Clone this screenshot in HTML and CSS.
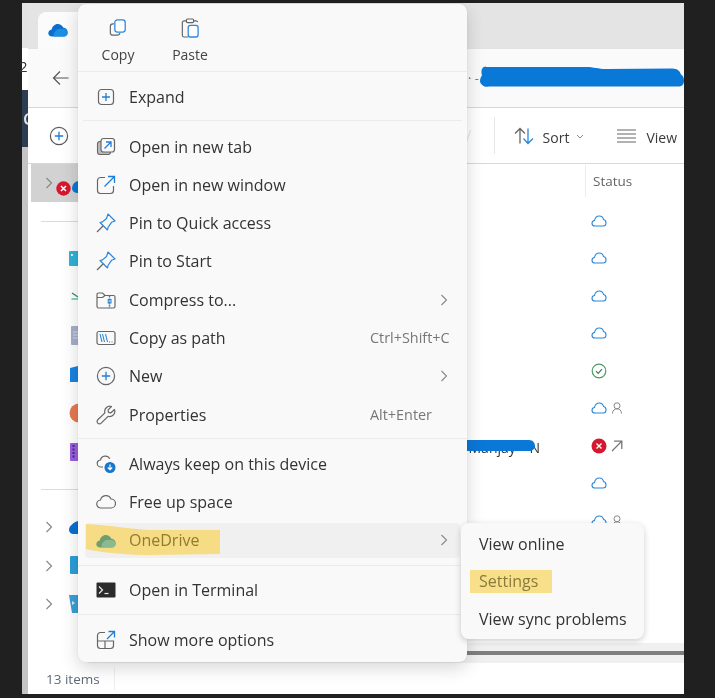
FILE: index.html
```html
<!DOCTYPE html>
<html lang="en">
<head>
<meta charset="utf-8">
<title>OneDrive context menu</title>
<link rel="stylesheet" href="styles.css">
</head>
<body>
<div class="page">
  <div class="window">
    <div class="strip">
      <div class="strip-top"></div>
      <div class="strip-num">2</div>
      <div class="strip-dark">C</div>
      <div class="strip-rest"></div>
    </div>
    <div class="explorer">
      <div class="tabbar">
        <div class="tab">
          <svg class="tab-cloud" viewBox="0 0 20 14" width="20" height="14"><path fill="#0a6fd0" d="M4 13.500C1.800 13.500 .3 12 .3 10.200c0-1.800 1.300-3.200 3.200-3.400C4.200 3.600 6.700 1 9.800 1c2.400 0 4.400 1.400 5.300 3.600 2.600.2 4.600 2.300 4.600 4.900 0 2.300-1.800 4-4.200 4z"/><path fill="#1c8fe0" d="M8 7.500c1-1.600 3.600-2.400 5.600-1.400 1.500-.6 4.200-.1 5.400 2.200.6 1.200.7 2.400.3 3.400-.6 1.100-1.900 1.800-3.500 1.800H7c-2.400 0-1.400-4.400 1-6z"/></svg>
        </div>
      </div>
      <div class="addressbar">
        <svg class="icon-back" viewBox="0 0 18 16" width="18" height="16"><path d="M16.500 8H1.500M8 1.500 1.500 8 8 14.500" fill="none" stroke="#555" stroke-width="1.200"/></svg>
        <span class="crumb-dash">· -</span>
        <svg class="scribble" viewBox="0 0 204 22" width="204" height="22"><path fill="#0a78d7" d="M6 1h100c8 0 12 2 20 2l66-.5c6 0 8 3 9 6 2 1 3 3 3 6 0 4-2 6-6 6H9c-4 1-8-1-9-5 0-3 1-5 2-6-1-3-1-9 4-9z"/></svg>
      </div>
      <div class="commandbar">
        <svg class="icon-add" viewBox="0 0 20 20" width="20" height="20"><circle cx="10" cy="10" r="8.600" fill="none" stroke="#5a5a5a" stroke-width="1.200"/><path d="M10 5.800v8.400M5.800 10h8.400" stroke="#1f7fd6" stroke-width="1.300"/></svg>
        <span class="cmd-ghost">/</span>
        <span class="cmd-sep"></span>
        <svg class="icon-sort" viewBox="0 0 20 18" width="20" height="18"><path d="M6 16.500V1.500M1 6.500l5-5 5 5" fill="none" stroke="#666" stroke-width="1.300"/><path d="M14 1.500v15M9.500 11.500l4.500 5 5-5" fill="none" stroke="#2a86d8" stroke-width="1.300"/></svg>
        <span class="cmd-label">Sort</span>
        <svg class="icon-caret" viewBox="0 0 8 5" width="8" height="5"><path d="M1 1l3 3 3-3" fill="none" stroke="#888"/></svg>
        <svg class="icon-view" viewBox="0 0 19 14" width="19" height="14"><path d="M0 1h19M0 5h19M0 9h19M0 13h19" stroke="#666" stroke-width="1.100"/></svg>
        <span class="cmd-label cmd-view">View</span>
      </div>
      <div class="content">
        <div class="nav">
          <div class="nav-selected">
            <svg class="chev" viewBox="0 0 8 12" width="8" height="12"><path d="M1.500 1l5 5-5 5" fill="none" stroke="#888" stroke-width="1.200"/></svg>
            <span class="nav-blue"></span>
          </div>
          <div class="nav-sep"></div>
          <div class="nav-row"><svg viewBox="0 0 20 20" width="20" height="20"><rect x="1" y="2" width="16" height="15" rx="1" fill="#2fb2d8"/><rect x="3" y="5" width="1.800" height="2" fill="#fff"/></svg></div>
          <div class="nav-row"><svg viewBox="0 0 20 20" width="20" height="20"><path d="M4 5l6 4" stroke="#3a8a70" stroke-width="1.300"/><path d="M3.500 11h7" stroke="#45c0a0" stroke-width="1.300"/></svg></div>
          <div class="nav-row"><svg viewBox="0 0 20 20" width="20" height="20"><rect x="3" y="0" width="14" height="19" rx="1" fill="#a6aecb"/><path d="M5 6h6M5 9h6M5 12h6" stroke="#d7dbe8"/></svg></div>
          <div class="nav-row"><svg viewBox="0 0 20 20" width="20" height="20"><path d="M2 3l8-2v16H2z" fill="#1a82e2"/></svg></div>
          <div class="nav-row"><svg viewBox="0 0 20 20" width="20" height="20"><circle cx="11" cy="10" r="9.500" fill="#e57a52"/></svg></div>
          <div class="nav-row"><svg viewBox="0 0 20 20" width="20" height="20"><rect x="2" y="1" width="14" height="18" rx="1" fill="#9a5fe0"/><path d="M5.500 3v14" stroke="#4b2a8a" stroke-width="2" stroke-dasharray="2 1.500"/></svg></div>
          <div class="nav-sep nav-sep-b"></div>
          <div class="nav-row nav-row-chev">
            <svg class="chev" viewBox="0 0 8 12" width="8" height="12"><path d="M1.500 1l5 5-5 5" fill="none" stroke="#888" stroke-width="1.200"/></svg>
            <svg viewBox="0 0 20 20" width="20" height="20"><path d="M1 13c0-3 3-7 9-9v13H5c-2 0-4-2-4-4z" fill="#0a6fd0"/></svg>
          </div>
          <div class="nav-row nav-row-chev">
            <svg class="chev" viewBox="0 0 8 12" width="8" height="12"><path d="M1.500 1l5 5-5 5" fill="none" stroke="#888" stroke-width="1.200"/></svg>
            <svg viewBox="0 0 20 20" width="20" height="20"><rect x="2" y="0" width="12" height="18" rx="1" fill="#2a9fd8"/></svg>
          </div>
          <div class="nav-row nav-row-chev">
            <svg class="chev" viewBox="0 0 8 12" width="8" height="12"><path d="M1.500 1l5 5-5 5" fill="none" stroke="#888" stroke-width="1.200"/></svg>
            <svg viewBox="0 0 20 20" width="20" height="20"><path d="M1 1l11 0v18H4z" fill="#3a9fd8"/><path d="M4 7l3 2-3 2z" fill="#d8eef8"/></svg>
          </div>
        </div>
        <div class="details">
          <div class="details-main">
            <div class="header-row"><span class="col-status">Status</span></div>
            <div class="rows">
              <div class="row"><svg viewBox="0 0 16 12" width="16" height="12"><path class="cloud" d="M4 11C2 11 1 9.600 1 8.200 1 6.800 2 5.700 3.500 5.500 4 3 5.800 1 8.300 1c2.200 0 3.800 1.500 4.200 3.500 1.500.3 2.500 1.700 2.500 3.200C15 9.500 13.700 11 12 11z"/></svg></div>
              <div class="row"><svg viewBox="0 0 16 12" width="16" height="12"><path class="cloud" d="M4 11C2 11 1 9.600 1 8.200 1 6.800 2 5.700 3.500 5.500 4 3 5.800 1 8.300 1c2.200 0 3.800 1.500 4.200 3.500 1.500.3 2.500 1.700 2.500 3.200C15 9.500 13.700 11 12 11z"/></svg></div>
              <div class="row"><svg viewBox="0 0 16 12" width="16" height="12"><path class="cloud" d="M4 11C2 11 1 9.600 1 8.200 1 6.800 2 5.700 3.500 5.500 4 3 5.800 1 8.300 1c2.200 0 3.800 1.500 4.200 3.500 1.500.3 2.500 1.700 2.500 3.200C15 9.500 13.700 11 12 11z"/></svg></div>
              <div class="row"><svg viewBox="0 0 16 12" width="16" height="12"><path class="cloud" d="M4 11C2 11 1 9.600 1 8.200 1 6.800 2 5.700 3.500 5.500 4 3 5.800 1 8.300 1c2.200 0 3.800 1.500 4.200 3.500 1.500.3 2.500 1.700 2.500 3.200C15 9.500 13.700 11 12 11z"/></svg></div>
              <div class="row"><svg viewBox="0 0 16 16" width="16" height="16"><circle cx="8" cy="8" r="6.800" fill="none" stroke="#4e9a68" stroke-width="1.200"/><path d="M5 8.200l2.200 2.200L11 6.200" fill="none" stroke="#3c7d52" stroke-width="1.200"/></svg></div>
              <div class="row"><svg viewBox="0 0 16 12" width="16" height="12"><path class="cloud" d="M4 11C2 11 1 9.600 1 8.200 1 6.800 2 5.700 3.500 5.500 4 3 5.800 1 8.300 1c2.200 0 3.800 1.500 4.200 3.500 1.500.3 2.500 1.700 2.500 3.200C15 9.500 13.700 11 12 11z"/></svg><svg class="person" viewBox="0 0 12 12" width="12" height="12"><circle cx="6" cy="3.800" r="3" fill="none" stroke="#888"/><path d="M1.500 11.500c0-3 2-4.700 4.500-4.700s4.500 1.700 4.500 4.700" fill="none" stroke="#888"/></svg></div>
              <div class="row">
                <span class="row-name">Manjay N</span>
                <svg class="name-scribble" viewBox="0 0 72 13" width="72" height="13"><path fill="#0a78d7" d="M4 1h62c4 0 6 3 6 6s-3 5-6 5H5C2 12 0 10 0 7s2-6 4-6z"/></svg>
                <svg viewBox="0 0 16 16" width="16" height="16"><circle cx="8" cy="8" r="7.500" fill="#d5172f"/><path d="M5.500 5.500l5 5M10.500 5.500l-5 5" stroke="#fff" stroke-width="1.400"/></svg><svg class="person" viewBox="0 0 12 12" width="12" height="12"><path d="M1 11 10.500 1.500M3 1.200h7.800V9" fill="none" stroke="#777" stroke-width="1.300"/></svg>
              </div>
              <div class="row"><svg viewBox="0 0 16 12" width="16" height="12"><path class="cloud" d="M4 11C2 11 1 9.600 1 8.200 1 6.800 2 5.700 3.500 5.500 4 3 5.800 1 8.300 1c2.200 0 3.800 1.500 4.200 3.500 1.500.3 2.500 1.700 2.500 3.200C15 9.500 13.700 11 12 11z"/></svg></div>
              <div class="row"><svg viewBox="0 0 16 12" width="16" height="12"><path class="cloud" d="M4 11C2 11 1 9.600 1 8.200 1 6.800 2 5.700 3.500 5.500 4 3 5.800 1 8.300 1c2.200 0 3.800 1.500 4.200 3.500 1.500.3 2.500 1.700 2.500 3.200C15 9.500 13.700 11 12 11z"/></svg><svg class="person" viewBox="0 0 12 12" width="12" height="12"><circle cx="6" cy="3.800" r="3" fill="none" stroke="#888"/><path d="M1.500 11.500c0-3 2-4.700 4.500-4.700s4.500 1.700 4.500 4.700" fill="none" stroke="#888"/></svg></div>
            </div>
          </div>
          <div class="scroll-band"><div class="scroll-thumb"></div></div>
        </div>
      </div>
      <div class="statusbar"><span class="status-count">13 items</span><span class="status-sep"></span></div>
    </div>
  </div>

  <svg class="badge" viewBox="0 0 15 15" width="15" height="15"><circle cx="7.500" cy="7.500" r="7.200" fill="#d5172f"/><path d="M5 5l5 5M10 5l-5 5" stroke="#fff" stroke-width="1.500"/></svg>

  <div class="menu">
    <div class="menu-actions">
      <div class="action">
        <svg class="action-copy" viewBox="0 0 20 20" width="18" height="18"><path d="M5.500 5.500H4.300A2.800 2.800 0 0 0 1.500 8.300v6.900A2.800 2.800 0 0 0 4.300 18h5A2.800 2.800 0 0 0 12 15.500" fill="none" stroke="#666" stroke-width="1.300"/><rect x="6.500" y="1" width="11.500" height="13.500" rx="2.800" fill="#fff" stroke="#2c86d9" stroke-width="1.400"/></svg>
        <span>Copy</span>
      </div>
      <div class="action">
        <svg class="action-paste" viewBox="0 0 20 22" width="18" height="20"><path d="M6 3H3.500A2 2 0 0 0 1.500 5v14a2 2 0 0 0 2 2H8" fill="none" stroke="#666" stroke-width="1.300"/><path d="M14 3h2.500a2 2 0 0 1 2 1.500" fill="none" stroke="#666" stroke-width="1.300"/><rect x="6" y="1" width="8" height="4" rx="1.200" fill="none" stroke="#666" stroke-width="1.300"/><rect x="8" y="8" width="11" height="13" rx="2.500" fill="#fff" stroke="#2c86d9" stroke-width="1.400"/></svg>
        <span>Paste</span>
      </div>
    </div>
    <div class="menu-group group-first">
      <div class="item"><svg viewBox="0 0 20 20" width="20" height="20"><rect x="2.500" y="2.500" width="15" height="15" rx="3" fill="none" stroke="#666" stroke-width="1.200"/><path d="M10 6v8M6 10h8" stroke="#1f7fd6" stroke-width="1.300"/></svg><span class="item-label">Expand</span></div>
    </div>
    <div class="menu-group group-main">
      <div class="item"><svg viewBox="0 0 20 20" width="20" height="20"><rect x="1.500" y="4.500" width="13" height="13" rx="2.500" fill="#bbb" stroke="#666" stroke-width="1.100"/><rect x="5" y="1.500" width="13.500" height="13.500" rx="2.500" fill="#f9f9f9" stroke="#666" stroke-width="1.200"/><path d="M8.500 11.500l6-6M10 5h5v5" fill="none" stroke="#1f7fd6" stroke-width="1.300"/></svg><span class="item-label">Open in new tab</span></div>
      <div class="item"><svg viewBox="0 0 20 20" width="20" height="20"><path d="M9 3.500H4.500a3 3 0 0 0-3 3v10a3 3 0 0 0 3 3h10a3 3 0 0 0 3-3V12" transform="translate(0 -1)" fill="none" stroke="#666" stroke-width="1.200"/><path d="M8.500 11.500 18 2M12 1.500h6.500V8" fill="none" stroke="#1f7fd6" stroke-width="1.300"/></svg><span class="item-label">Open in new window</span></div>
      <div class="item"><svg viewBox="0 0 20 20" width="20" height="20"><path d="M12 1l7 7-3.500 1.300-3.500 5.200-.5 2.500L4 9.500l2.500-.6 4-3.400z" fill="none" stroke="#2c86d9" stroke-width="1.200" stroke-linejoin="round"/><path d="M7 13l-6 6" stroke="#666" stroke-width="1.200"/></svg><span class="item-label">Pin to Quick access</span></div>
      <div class="item"><svg viewBox="0 0 20 20" width="20" height="20"><path d="M12 1l7 7-3.500 1.300-3.500 5.200-.5 2.500L4 9.500l2.500-.6 4-3.400z" fill="none" stroke="#2c86d9" stroke-width="1.200" stroke-linejoin="round"/><path d="M7 13l-6 6" stroke="#666" stroke-width="1.200"/></svg><span class="item-label">Pin to Start</span></div>
      <div class="item"><svg viewBox="0 0 20 20" width="20" height="20"><path d="M1 6V4.500A1.500 1.500 0 0 1 2.500 3h4L9 5.500h8.500A1.500 1.500 0 0 1 19 7v9.500a1.500 1.500 0 0 1-1.500 1.500h-15A1.500 1.500 0 0 1 1 16.500zM1 7.500h5.500L9 5.500" fill="none" stroke="#666" stroke-width="1.200"/><path d="M13.500 5.500V18" stroke="#1f7fd6" stroke-width="1.400" stroke-dasharray="2 1"/><rect x="12.200" y="9.500" width="2.800" height="3.500" fill="none" stroke="#1f7fd6"/></svg><span class="item-label">Compress to...</span><svg class="item-chev" viewBox="0 0 8 12" width="8" height="12"><path d="M1.500 1l5 5-5 5" fill="none" stroke="#888" stroke-width="1.100"/></svg></div>
      <div class="item"><svg viewBox="0 0 20 20" width="20" height="20"><rect x="1" y="3.500" width="18" height="13" rx="2" fill="none" stroke="#666" stroke-width="1.200"/><path d="M4 6l2 8M6.500 6l2 8M9.500 6l2 8" stroke="#1f7fd6" stroke-width="1"/><path d="M13 14h1M15.500 14h1" stroke="#666" stroke-width="1.200"/></svg><span class="item-label">Copy as path</span><span class="shortcut">Ctrl+Shift+C</span></div>
      <div class="item"><svg viewBox="0 0 20 20" width="20" height="20"><circle cx="10" cy="10" r="8.600" fill="none" stroke="#666" stroke-width="1.200"/><path d="M10 5.800v8.400M5.800 10h8.400" stroke="#1f7fd6" stroke-width="1.300"/></svg><span class="item-label">New</span><svg class="item-chev" viewBox="0 0 8 12" width="8" height="12"><path d="M1.500 1l5 5-5 5" fill="none" stroke="#888" stroke-width="1.100"/></svg></div>
      <div class="item"><svg viewBox="0 0 20 20" width="20" height="20"><path d="M18.500 4.500l-3.500 3.300-2.500-.4-.4-2.500 3.400-3.400a5.200 5.200 0 0 0-6.600 6.400L1.800 14.800a2.400 2.400 0 0 0 3.400 3.400l6.900-6.900a5.200 5.200 0 0 0 6.400-6.800z" fill="none" stroke="#666" stroke-width="1.200" stroke-linejoin="round"/></svg><span class="item-label">Properties</span><span class="shortcut">Alt+Enter</span></div>
    </div>
    <div class="menu-group group-drive">
      <div class="item"><svg viewBox="0 0 20 20" width="20" height="20"><path d="M7 13H5a3.500 3.500 0 0 1-.5-7A5 5 0 0 1 13.800 4.800" fill="none" stroke="#666" stroke-width="1.200"/><circle cx="14" cy="13.500" r="5.500" fill="#1777cf"/><path d="M14 10.500v5M11.800 13.500l2.200 2.200 2.200-2.200" fill="none" stroke="#fff" stroke-width="1.200"/></svg><span class="item-label">Always keep on this device</span></div>
      <div class="item"><svg viewBox="0 0 20 20" width="20" height="20"><path d="M5 16a4 4 0 0 1-.5-8 5.500 5.500 0 0 1 10.500-1 4.500 4.500 0 0 1 0 9z" fill="none" stroke="#666" stroke-width="1.200"/></svg><span class="item-label">Free up space</span></div>
      <div class="item item-hover">
        <svg class="marker" viewBox="0 0 134 32" width="134" height="32"><path fill="#f6dc85" d="M0 0c22 1 44 5 64 6h70v24l-70 1C44 31 18 29 0 25z"/></svg>
        <svg class="item-icon-over" viewBox="0 0 20 14" width="20" height="14"><path fill="#6f9e73" d="M4 13.500C1.800 13.500.3 12 .3 10.200c0-1.800 1.300-3.200 3.200-3.400C4.200 3.600 6.700 1 9.800 1c2.400 0 4.400 1.400 5.300 3.600 2.600.2 4.600 2.300 4.600 4.900 0 2.300-1.800 4-4.200 4z"/><path fill="#8db98f" d="M8 7.500c1-1.600 3.600-2.400 5.600-1.400 1.500-.6 4.200-.1 5.400 2.200.6 1.200.7 2.400.3 3.400-.6 1.100-1.900 1.800-3.500 1.800H7c-2.400 0-1.400-4.400 1-6z"/></svg>
        <span class="item-label label-marked">OneDrive</span>
        <svg class="item-chev" viewBox="0 0 8 12" width="8" height="12"><path d="M1.500 1l5 5-5 5" fill="none" stroke="#888" stroke-width="1.100"/></svg>
      </div>
    </div>
    <div class="menu-group group-term">
      <div class="item"><svg viewBox="0 0 20 16" width="20" height="16"><rect x=".5" y=".5" width="19" height="15" rx="1" fill="#2b2b2b"/><path d="M3 4.500l3.500 3.500L3 11.500" fill="none" stroke="#eee" stroke-width="1.200"/><path d="M8.500 11.500h4" stroke="#eee" stroke-width="1.200"/></svg><span class="item-label">Open in Terminal</span></div>
    </div>
    <div class="menu-group group-last">
      <div class="item"><svg viewBox="0 0 20 20" width="20" height="20"><path d="M9 2.500H4.500a3 3 0 0 0-3 3v10a3 3 0 0 0 3 3h10a3 3 0 0 0 3-3V11H9v7.500M1.500 11H9" fill="none" stroke="#666" stroke-width="1.200"/><path d="M11 9l7-7M12.500 1.500h6V7.500" fill="none" stroke="#1f7fd6" stroke-width="1.300"/></svg><span class="item-label">Show more options</span></div>
    </div>
  </div>

  <div class="submenu">
    <div class="sub-item">View online</div>
    <div class="sub-item"><span class="sub-marked">Settings</span></div>
    <div class="sub-item">View sync problems</div>
  </div>
</div>
</body>
</html>
```

FILE: styles.css
```css
* { box-sizing: border-box; }
html, body { margin: 0; height: 100%; background: #202020; overflow: hidden; }
body { font-family: "Open Sans", "Noto Sans", "Liberation Sans", sans-serif; color: #333; }
svg { display: block; flex: none; }

.page { position: relative; width: 715px; height: 698px; padding: 3px 31px 4px 22px; filter: blur(.5px); }
.window { display: flex; height: 100%; }

/* left sliver of the window behind */
.strip { width: 6px; display: flex; flex-direction: column; background: #c4c4c4; flex: none; }
.strip-top { height: 45px; background: #e2e2e2; }
.strip-num { height: 42px; background: #fff; font-size: 15px; line-height: 36px; color: #333; text-indent: -3px; }
.strip-dark { height: 57px; background: #2c3d52; color: #e0e4e8; font-size: 17px; line-height: 57px; font-weight: 600; text-indent: 1px; overflow: hidden; }
.strip-rest { flex: 1; }

.explorer { flex: 1; display: flex; flex-direction: column; background: #fff; min-width: 0; }

.tabbar { height: 46px; background: #e4e4e4; padding: 9px 0 0 10px; border-bottom: 1px solid #e2e2e2; }
.tab { width: 120px; height: 37px; background: #fbfbfb; border-radius: 8px 8px 0 0; padding: 11px 0 0 10px; }

.addressbar { height: 59px; background: #fafafa; border-bottom: 1px solid #d8d8d8; display: flex; align-items: center; padding-left: 24px; }
.icon-back { margin-top: -1px; }
.crumb-dash { margin-left: auto; color: #777; font-size: 13px; }
.scribble { margin-top: -2px; margin-left: 1px; }

.commandbar { height: 56px; border-bottom: 1px solid #d8d8d8; display: flex; align-items: center; padding-left: 21px; overflow: hidden; }
.icon-add { margin-top: 1px; }
.cmd-ghost { margin-left: auto; color: #eaeaea; font-size: 18px; }
.cmd-sep { width: 1px; height: 37px; background: #e6e6e6; margin-left: 22px; margin-right: 19px; }
.icon-sort { margin-right: 9px; }
.cmd-label { font-size: 14px; color: #3a3a3a; padding-top: 3px; }
.icon-caret { margin-left: 7px; margin-right: 33px; margin-top: 2px; }
.icon-view { margin-top: 1px; }
.cmd-view { margin-left: 10px; margin-right: 7px; }

.content { flex: 1; display: flex; min-height: 0; }

.nav { width: 60px; flex: none; display: flex; flex-direction: column; overflow: hidden; }
.nav-selected { height: 38px; margin-left: 3px; width: 60px; background: #d2d2d2; display: flex; align-items: center; padding-left: 14px; }
.nav-blue { width: 18px; height: 12px; margin-left: 19px; margin-top: 8px; background: #0a78d7; border-radius: 9px 0 0 6px; }
.nav-sep { height: 1px; background: #dcdcdc; margin: 19px 0 18px 13px; flex: none; }
.nav-sep-b { margin-top: 18px; }
.nav-row { height: 38.500px; flex: none; display: flex; align-items: center; padding-left: 40px; }
.nav-row-chev { padding-left: 17px; gap: 15px; }

.details { flex: 1; display: flex; flex-direction: column; min-width: 0; }
.details-main { flex: 1; position: relative; overflow: hidden; min-height: 0; }
.header-row { height: 36px; padding-left: 497px; padding-top: 1px; }
.col-status { display: block; height: 32px; border-left: 1px solid #ececec; padding-left: 7px; font-size: 13.500px; line-height: 32px; color: #666; }
.rows { display: flex; flex-direction: column; padding-top: 2px; }
.row { height: 37.500px; flex: none; display: flex; align-items: center; padding-left: 503px; gap: 4px; position: relative; }
.cloud { fill: none; stroke: #2a86d8; stroke-width: 1.100; }
.row-name { position: absolute; right: 144px; top: 11px; font-size: 14px; color: #333; white-space: nowrap; word-spacing: 10px; }
.name-scribble { position: absolute; left: 375px; top: 12px; }

.scroll-band { height: 20px; flex: none; background: #f0f0f0; padding-top: 8px; }
.scroll-thumb { height: 4px; background: #7f7f7f; }

.statusbar { height: 31px; flex: none; display: flex; align-items: center; padding-left: 18px; }
.status-count { font-size: 13.500px; color: #5d6b7a; width: 68px; }
.status-sep { width: 1px; height: 22px; background: #eee; }

/* context menu floats over the explorer */
.badge { position: absolute; left: 56px; top: 181px; }
.menu { position: absolute; left: 78px; top: 4px; width: 389px; background: #f9f9f9; border-radius: 8px; box-shadow: 0 6px 18px rgba(0,0,0,.16), 0 0 2px rgba(0,0,0,.08); }
.menu-actions { height: 68px; display: flex; padding-left: 4px; border-bottom: 1px solid #ebebeb; }
.action { width: 72px; display: flex; flex-direction: column; align-items: center; font-size: 14px; color: #444; }
.action-copy { margin-top: 15px; }
.action-paste { margin-top: 14px; margin-bottom: -1px; }
.action span { margin-top: 8px; }
.menu-group { padding: 7px 7px 6px; display: flex; flex-direction: column; gap: 3.300px; border-bottom: 1px solid #ebebeb; }
.group-first { margin: 0 5px; padding-left: 2px; padding-right: 2px; }
.group-main { padding-top: 8px; }
.group-drive { padding-bottom: 7px; }
.group-term { padding-bottom: 6.500px; }
.group-last { border-bottom: 0; padding-bottom: 5px; }
.item { height: 35px; display: flex; align-items: center; padding: 0 10px 0 11px; border-radius: 4px; position: relative; font-size: 16px; }
.item-label { margin-left: 13px; color: #333; white-space: nowrap; }
.item-chev { margin-left: auto; margin-right: 2px; }
.shortcut { margin-left: auto; width: 80px; font-size: 14.400px; color: #777; white-space: nowrap; }
.item-hover { background: #f0f0f0; }
.marker { position: absolute; left: 1px; top: 1px; }
.item-icon-over { position: relative; margin-top: 2px; }
.label-marked { position: relative; color: #8f7d2e; }

.submenu { position: absolute; left: 461px; top: 523px; width: 183px; height: 116px; background: #f9f9f9; border-radius: 8px; box-shadow: 0 2px 6px rgba(0,0,0,.2); padding: 4px 0 3px; display: flex; flex-direction: column; gap: 3.600px; font-size: 16px; }
.sub-item { height: 34px; display: flex; align-items: center; padding-left: 18px; color: #333; white-space: nowrap; }
.sub-marked { background: #f8e08a; color: #8a7a3a; height: 23px; line-height: 23px; padding: 0 14px 0 9px; margin-left: -9px; }
```
